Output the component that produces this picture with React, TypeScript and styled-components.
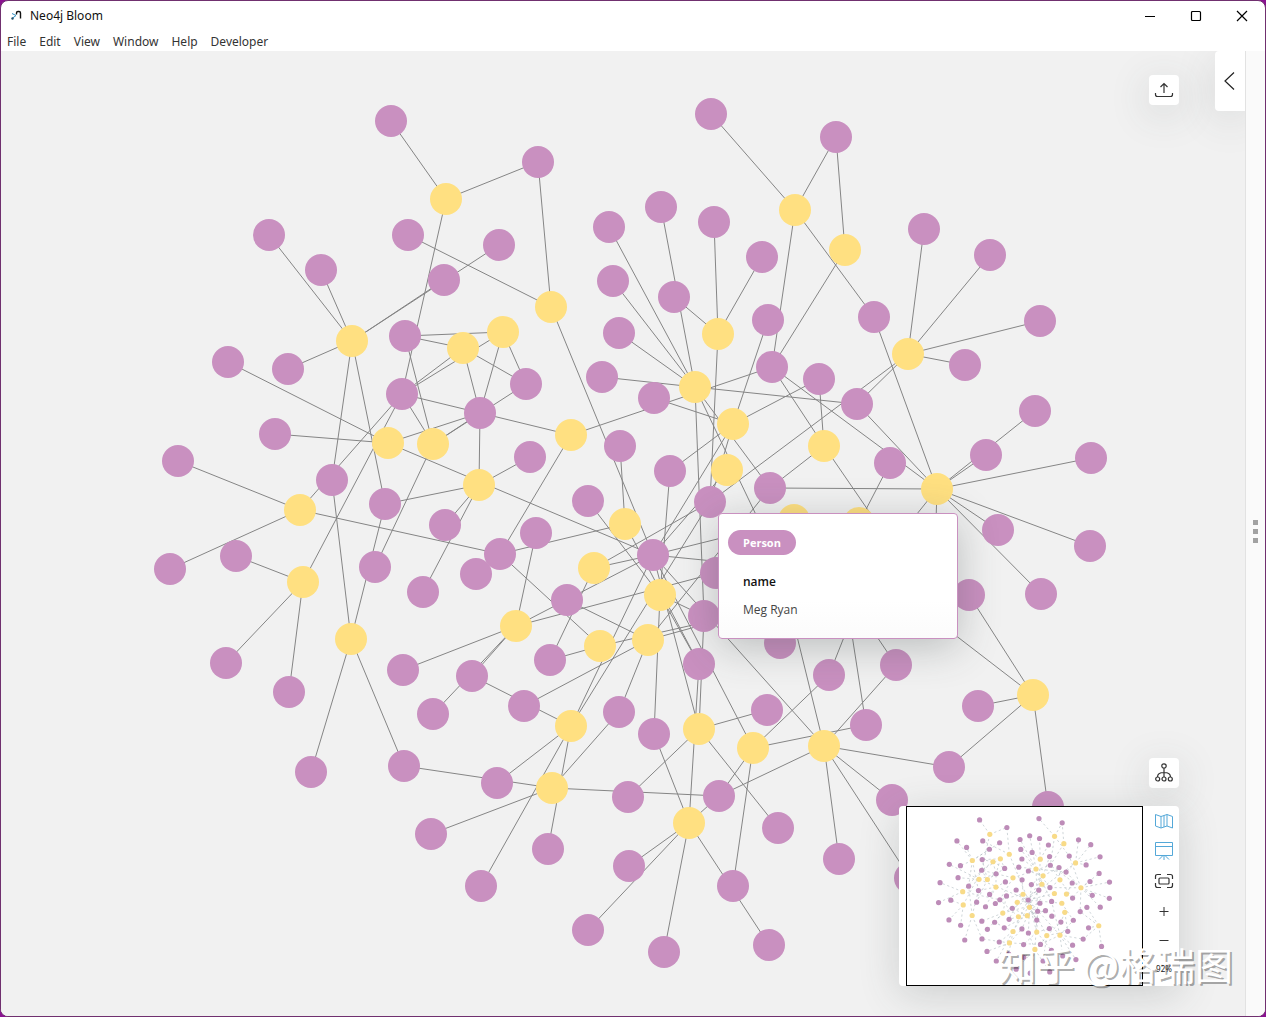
import React from "react";
import styled, { createGlobalStyle } from "styled-components";

const PERSON = "#c990c0";
const MOVIE = "#ffe081";

const people: [number, number][] = [
  [391, 121], [538, 162], [711, 114], [836, 137], [269, 235], [321, 270], [408, 235], [499, 245], [444, 280], [405, 336],
  [228, 362], [288, 369], [402, 394], [526, 384], [480, 413], [275, 434], [178, 461], [332, 480], [385, 504], [445, 525],
  [530, 457], [170, 569], [236, 556], [375, 567], [423, 592], [476, 574], [500, 554], [536, 533], [588, 501], [226, 663],
  [289, 692], [311, 772], [404, 766], [403, 670], [433, 714], [472, 676], [550, 660], [567, 600], [524, 706], [497, 783],
  [431, 834], [548, 849], [481, 886], [609, 227], [661, 207], [714, 222], [762, 257], [613, 281], [674, 297], [619, 333],
  [602, 377], [654, 398], [768, 320], [772, 367], [819, 379], [857, 404], [874, 317], [924, 229], [990, 255], [1040, 321],
  [965, 365], [1035, 411], [1091, 458], [986, 455], [890, 463], [998, 530], [1090, 546], [1041, 594], [969, 595], [620, 446],
  [670, 471], [710, 502], [770, 488], [653, 555], [716, 573], [704, 616], [699, 664], [780, 643], [829, 675], [896, 665],
  [866, 725], [767, 710], [619, 712], [654, 734], [628, 797], [719, 796], [778, 828], [839, 859], [892, 800], [949, 767],
  [978, 706], [1048, 807], [910, 878], [733, 886], [629, 866], [588, 930], [664, 952], [769, 945], [779, 563], [892, 545],
  [933, 618], [746, 613],
];

const movies: [number, number][] = [
  [446, 199], [551, 307], [503, 332], [463, 348], [352, 341], [388, 443], [433, 444], [479, 485], [571, 435], [300, 510],
  [303, 582], [351, 639], [516, 626], [594, 568], [625, 524], [600, 646], [648, 640], [660, 595], [571, 726], [552, 788],
  [699, 729], [753, 748], [824, 746], [689, 823], [718, 334], [695, 387], [733, 424], [727, 470], [824, 446], [795, 210],
  [845, 250], [908, 354], [937, 489], [1033, 695], [794, 520], [859, 523], [834, 573], [850, 622],
];

/* People connected to each movie, in the order of `movies`. */
const cast: number[][] = [
  [0, 1, 12], [1, 6, 73], [9, 12, 13, 14], [9, 12, 13, 14], [4, 5, 7, 8, 11, 17, 18], [10, 14, 15, 73], [9, 12, 13, 14, 23],
  [14, 18, 19, 20, 24], [12, 26, 53], [12, 16, 21, 26], [12, 22, 29, 30], [17, 18, 31, 32], [27, 33, 34, 35, 73, 74],
  [36, 71, 73], [26, 69, 76], [26, 36, 101], [37, 38, 72, 82, 101], [28, 70, 75, 76, 83], [35, 39, 41, 42, 71, 73],
  [32, 40, 82, 85], [73, 75, 81, 84, 86], [73, 78, 80, 85, 93], [73, 79, 85, 87, 88, 89, 92, 98], [76, 83, 85, 94, 95, 96, 97],
  [45, 46, 48, 71], [43, 44, 47, 49, 50, 55, 72, 75, 98], [51, 52, 54, 70, 71, 73], [73], [53, 54, 72, 99], [2, 3, 53, 56],
  [3, 53], [55, 57, 58, 59, 60, 71], [53, 55, 56, 61, 62, 63, 65, 66, 67, 72, 99, 100], [68, 89, 90, 91, 100],
  [73], [64], [73, 79], [78, 80],
];

const GlobalStyle = createGlobalStyle`
  * { box-sizing: border-box; }
  body { margin: 0; background: #8a1290; font-family: "Noto Sans", "Noto Sans CJK SC", sans-serif; }
  button { font: inherit; color: inherit; border: 0; padding: 0; background: transparent; cursor: pointer; }
`;

const Window = styled.div`
  display: flex;
  flex-direction: column;
  min-height: 100vh;
  border: 1px solid #70306f;
  border-radius: 8px;
  background: #fff;
  overflow: hidden;
`;

const TitleBar = styled.header`
  display: flex;
  align-items: center;
  height: 29px;
  padding-left: 9px;
  gap: 7px;
`;

const Title = styled.h1`
  flex: 1;
  margin: 0;
  font-size: 12px;
  font-weight: 400;
  line-height: 20px;
  color: #111;
`;

const WindowControls = styled.div`
  display: flex;
`;

const WindowButton = styled.button`
  display: grid;
  place-items: center;
  width: 46px;
  height: 28px;
`;

const MenuBar = styled.nav`
  display: flex;
  align-items: center;
  height: 21px;
  padding: 2px 0 0 6px;
  gap: 13px;
`;

const MenuItem = styled.button`
  font-size: 12px;
  line-height: 19px;
  color: #333;
`;

const Workspace = styled.div`
  display: grid;
  grid-template-columns: 1fr 20px;
  flex: 1;
`;

const Scene = styled.main`
  position: relative;
  background: #f1f1f1;
  overflow: hidden;
`;

const GraphSvg = styled.svg`
  position: absolute;
  inset: 0;
  width: 100%;
  height: 100%;
`;

const Drawer = styled.aside`
  display: grid;
  place-items: center;
  padding-bottom: 4px;
  background: #fafafa;
  border-left: 1px solid #e2e2e2;
`;

const DragHandle = styled.button`
  display: grid;
  gap: 4px;
`;

const Grip = styled.span`
  width: 5px;
  height: 5px;
  background: #a2a2a2;
`;

const DrawerToggle = styled.button`
  position: absolute;
  top: 0;
  right: 0;
  display: grid;
  place-items: center;
  width: 30px;
  height: 60px;
  border-radius: 4px 0 0 4px;
  background: #fff;
  box-shadow: 0 8px 40px rgba(60, 70, 70, 0.15);
`;

const SquareButton = styled.button`
  display: grid;
  place-items: center;
  width: 30px;
  height: 30px;
  border-radius: 4px;
  background: #fff;
  color: #333;
  box-shadow: 0 8px 40px rgba(60, 70, 70, 0.18);
`;

const TopTools = styled.div`
  position: absolute;
  top: 24px;
  right: 66px;
`;

const BottomTools = styled.div`
  position: absolute;
  right: 66px;
  bottom: 30px;
  display: flex;
  flex-direction: column;
  align-items: flex-end;
  gap: 18px;
`;

const Dock = styled.section`
  display: flex;
  gap: 6px;
  padding-left: 7px;
  border-radius: 4px;
  background: #fff;
  box-shadow: 0 8px 40px rgba(60, 70, 70, 0.2);
`;

const MinimapSvg = styled.svg`
  display: block;
  width: 237px;
  height: 180px;
  border: 1px solid #000;
`;

const DockTools = styled.div`
  display: flex;
  flex-direction: column;
`;

const DockButton = styled.button<{ $active?: boolean }>`
  display: grid;
  place-items: center;
  width: 30px;
  height: 30px;
  color: ${(p) => (p.$active ? "#54a8d8" : "#333")};
`;

const ZoomLevel = styled.output`
  position: relative;
  z-index: 1;
  font-size: 8px;
  line-height: 26px;
  text-align: center;
  color: #222;
`;

const Popover = styled.section`
  position: absolute;
  left: 717px;
  top: 462px;
  width: 240px;
  padding: 16px 9px 14px;
  border: 1px solid ${PERSON};
  border-radius: 4px;
  background: linear-gradient(#fff 70%, #fbfbfb);
  font-family: "Open Sans", "Noto Sans", sans-serif;
  font-size: 12px;
  box-shadow: 0 8px 40px rgba(60, 70, 70, 0.3);
`;

const Label = styled.span`
  display: block;
  width: fit-content;
  padding: 0 15px;
  border-radius: 13px;
  background: ${PERSON};
  color: #fff;
  font-size: 11px;
  font-weight: 700;
  line-height: 25px;
`;

const Properties = styled.dl`
  margin: 13px 15px 0;
`;

const PropertyName = styled.dt`
  font-weight: 600;
  line-height: 28px;
  color: #111;
`;

const PropertyValue = styled.dd`
  margin: 0;
  line-height: 28px;
  color: #444;
`;

const Watermark = styled.p`
  position: absolute;
  right: 12px;
  bottom: 24px;
  margin: 0;
  font-family: "Noto Sans CJK SC", sans-serif;
  font-size: 38px;
  line-height: 56px;
  white-space: nowrap;
  color: #fff;
  text-shadow: 2px 2px 0 rgba(0, 0, 0, 0.32);
  pointer-events: none;
`;

const edges = cast.flatMap((ids, m) => ids.map((p) => [...movies[m], ...people[p]]));

function Graph() {
  return (
    <GraphSvg viewBox="1 51 1244 965" role="img" aria-label="Graph of people and movies">
      <g stroke="#858585" strokeWidth={1}>
        {edges.map(([x1, y1, x2, y2], i) => <line key={i} x1={x1} y1={y1} x2={x2} y2={y2} />)}
      </g>
      <g fill={PERSON}>{people.slice(0, 98).map(([x, y], i) => <circle key={i} cx={x} cy={y} r={16} />)}</g>
      <g fill={MOVIE}>{movies.map(([x, y], i) => <circle key={i} cx={x} cy={y} r={16} />)}</g>
    </GraphSvg>
  );
}

function Minimap() {
  return (
    <MinimapSvg viewBox="0 51 1266 965" preserveAspectRatio="none" role="img" aria-label="Minimap">
      <g stroke="#a9b4bb" strokeWidth={3} strokeDasharray="12 14">
        {edges.map(([x1, y1, x2, y2], i) => <line key={i} x1={x1} y1={y1} x2={x2} y2={y2} />)}
      </g>
      <g fill="#bd8cb8">{people.map(([x, y], i) => <circle key={i} cx={x} cy={y} r={14} />)}</g>
      <g fill="#f8db88">{movies.map(([x, y], i) => <circle key={i} cx={x} cy={y} r={14} />)}</g>
    </MinimapSvg>
  );
}

const Icon = ({ children, size = 20 }: { children: React.ReactNode; size?: number }) => (
  <svg width={size} height={size} viewBox={`0 0 ${size} ${size}`} fill="none" stroke="currentColor" strokeWidth={1.2} aria-hidden="true">
    {children}
  </svg>
);

export default function App() {
  return (
    <>
      <GlobalStyle />
      <Window>
        <TitleBar>
          <svg width="13" height="13" viewBox="0 0 13 13" fill="none" aria-hidden="true">
            <path d="M6.5 5.5V4Q6.5 2.5 8 2.5H9Q10.5 2.5 10.5 4V9.5" stroke="#111" strokeWidth="1.4" />
            <path d="M2 4.5L6 6.5L2 9.5" stroke="#2f8fc4" strokeWidth="1" />
            <circle cx="2.5" cy="9.5" r="1.2" fill="#24526e" />
          </svg>
          <Title>Neo4j Bloom</Title>
          <WindowControls>
            <WindowButton aria-label="Minimize">
              <Icon size={12}><path d="M1 6.5H11" stroke="#000" strokeWidth="1" /></Icon>
            </WindowButton>
            <WindowButton aria-label="Maximize">
              <Icon size={12}><rect x="1.5" y="1.5" width="9" height="9" rx="1" stroke="#000" /></Icon>
            </WindowButton>
            <WindowButton aria-label="Close">
              <Icon size={12}><path d="M1 1L11 11M11 1L1 11" stroke="#000" /></Icon>
            </WindowButton>
          </WindowControls>
        </TitleBar>
        <MenuBar>
          {["File", "Edit", "View", "Window", "Help", "Developer"].map((m) => <MenuItem key={m}>{m}</MenuItem>)}
        </MenuBar>
        <Workspace>
          <Scene>
            <Graph />
            <Popover>
              <Label>Person</Label>
              <Properties>
                <PropertyName>name</PropertyName>
                <PropertyValue>Meg Ryan</PropertyValue>
              </Properties>
            </Popover>
            <TopTools>
              <SquareButton aria-label="Export">
                <Icon><path d="M10 13V3.5M6.5 7L10 3.5L13.5 7M1.5 13V14.5Q1.5 16.5 3.5 16.5H16.5Q18.5 16.5 18.5 14.5V13" /></Icon>
              </SquareButton>
            </TopTools>
            <DrawerToggle aria-label="Open drawer">
              <Icon><path d="M14 1.5L5 10L14 18.5" stroke="#222" /></Icon>
            </DrawerToggle>
            <BottomTools>
              <SquareButton aria-label="Layout">
                <Icon>
                  <circle cx="10" cy="3" r="2.2" />
                  <path d="M10 5.2V14M3.5 14C3.5 10.5 6 9.5 10 9.5S16.5 10.5 16.5 14" />
                  <circle cx="3.7" cy="16" r="2" /><circle cx="10" cy="16" r="2" /><circle cx="16.3" cy="16" r="2" />
                </Icon>
              </SquareButton>
              <Dock>
                <Minimap />
                <DockTools>
                  <DockButton $active aria-label="Toggle minimap">
                    <Icon><path d="M1.5 3.5L7 5.5L13 3.5L18.5 5.5V17L13 15L7 17L1.5 15ZM7 5.5V17M10 4.5V16M13 3.5V15" strokeWidth="1" /></Icon>
                  </DockButton>
                  <DockButton $active aria-label="Presentation mode">
                    <Icon><path d="M1.5 1.5H18.5V14.5H1.5ZM1.5 5.5H18.5M10 14.5V19M9 14.5L5 18.5M11 14.5L15 18.5" strokeWidth="1" /></Icon>
                  </DockButton>
                  <DockButton aria-label="Fit to screen">
                    <Icon>
                      <path d="M1.5 8V5.5Q1.5 3.5 3.5 3.5H7M13 3.5H16.5Q18.5 3.5 18.5 5.5V8M18.5 12V14.5Q18.5 16.5 16.5 16.5H13M7 16.5H3.5Q1.5 16.5 1.5 14.5V12" />
                      <rect x="5" y="7" width="10" height="6" rx="1" />
                    </Icon>
                  </DockButton>
                  <DockButton aria-label="Zoom in">
                    <Icon><path d="M5.5 10.5H14.5M10 6V15" strokeWidth="1" /></Icon>
                  </DockButton>
                  <DockButton aria-label="Zoom out">
                    <Icon><path d="M5.5 9.5H14.5" strokeWidth="1" /></Icon>
                  </DockButton>
                  <ZoomLevel>92%</ZoomLevel>
                </DockTools>
              </Dock>
            </BottomTools>
            <Watermark>知乎 @格瑞图</Watermark>
          </Scene>
          <Drawer>
            <DragHandle aria-label="Resize drawer"><Grip /><Grip /><Grip /></DragHandle>
          </Drawer>
        </Workspace>
      </Window>
    </>
  );
}
